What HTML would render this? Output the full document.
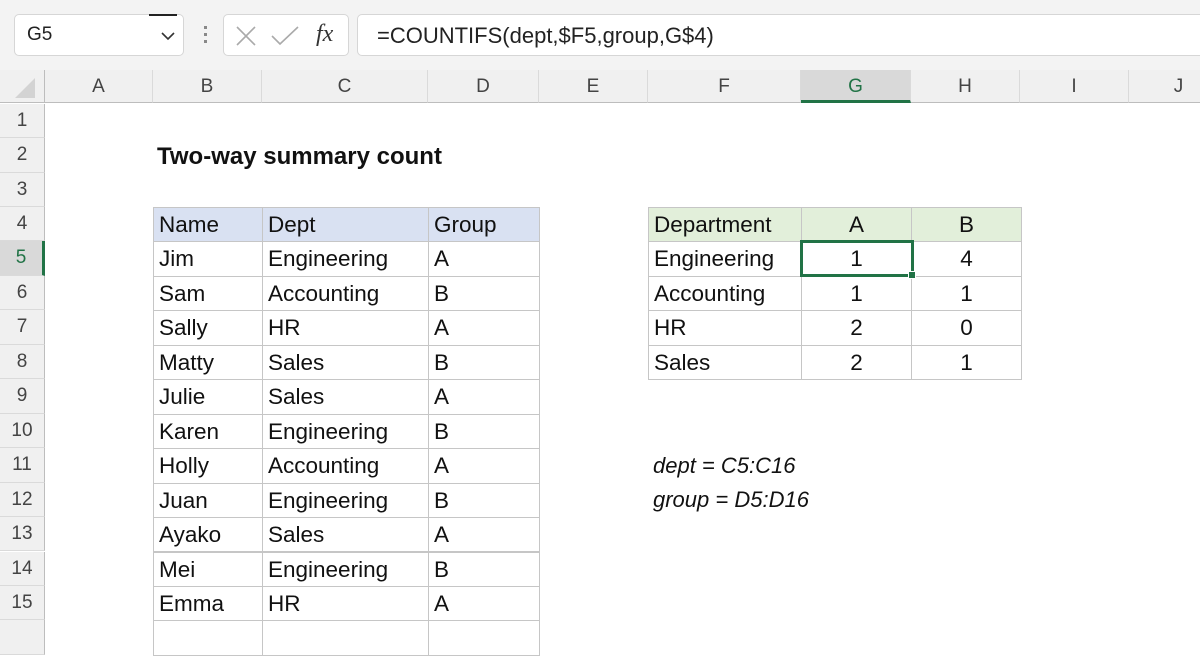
<!DOCTYPE html>
<html><head><style>
*{margin:0;padding:0;box-sizing:border-box}
body{width:1200px;height:630px;overflow:hidden;background:#fff;font-family:"Liberation Sans",sans-serif;position:relative}
.a{position:absolute}
.tb{left:0;top:0;width:1200px;height:70px;background:#f3f3f3}
.box{background:#fff;border:1px solid #d6d6d6;border-radius:5px;height:42px;top:14px}
.ch{top:70px;height:33px;background:#f0f0f0;border-bottom:1px solid #bdbdbd;font-size:19px;color:#444;text-align:center;line-height:33px;border-right:1px solid #dadada}
.rh{left:0;width:45px;background:#f0f0f0;border-right:1px solid #bdbdbd;border-bottom:1px solid #dadada;font-size:19px;color:#444;text-align:center}
.c{border:1px solid #c6c6c6;font-size:22.5px;color:#111;padding-left:5px;white-space:nowrap;overflow:hidden}
.n{text-align:center;padding-left:0}
</style></head><body>
<div class="a tb"></div>
<div class="a box" style="left:14px;width:170px"><span class="a" style="left:12px;top:9px;font-size:19px;color:#222">G5</span><svg class="a" style="left:146px;top:16px" width="14" height="10"><path d="M1 2 L7 8 L13 2" stroke="#333" stroke-width="1.6" fill="none"/></svg><div class="a" style="left:134px;top:-1px;width:28px;height:2px;background:#222"></div></div>
<div class="a" style="left:204px;top:26px;width:3px;height:3px;background:#888"></div>
<div class="a" style="left:204px;top:33px;width:3px;height:3px;background:#888"></div>
<div class="a" style="left:204px;top:40px;width:3px;height:3px;background:#888"></div>
<div class="a box" style="left:223px;width:126px"><svg class="a" style="left:10px;top:10px" width="24" height="22"><path d="M3 2 L21 20 M21 2 L3 20" stroke="#aaa" stroke-width="1.6"/></svg><svg class="a" style="left:46px;top:10px" width="30" height="22"><path d="M2 11 L10 19 L28 2" stroke="#aaa" stroke-width="1.6" fill="none"/></svg><span class="a" style="left:92px;top:6px;font-family:'Liberation Serif',serif;font-style:italic;font-size:24px;color:#333">fx</span></div>
<div class="a box" style="left:357px;width:860px"><span class="a" style="left:19px;top:8px;font-size:22px;color:#222">=COUNTIFS(dept,$F5,group,G$4)</span></div>
<div class="a" style="left:0;top:70px;width:45px;height:33px;background:#f0f0f0;border-right:1px solid #bdbdbd;border-bottom:1px solid #bdbdbd"><svg class="a" style="left:14px;top:7px" width="22" height="22"><path d="M21 1 L21 21 L1 21 Z" fill="#d3d3d3"/></svg></div>
<div class="a ch" style="left:45px;width:108px">A</div>
<div class="a ch" style="left:153px;width:109px">B</div>
<div class="a ch" style="left:262px;width:166px">C</div>
<div class="a ch" style="left:428px;width:111px">D</div>
<div class="a ch" style="left:539px;width:109px">E</div>
<div class="a ch" style="left:648px;width:153px">F</div>
<div class="a ch" style="left:801px;width:110px;background:#d9d9d9;color:#217346;border-bottom:3px solid #217346">G</div>
<div class="a ch" style="left:911px;width:109px">H</div>
<div class="a ch" style="left:1020px;width:109px">I</div>
<div class="a ch" style="left:1129px;width:100px">J</div>
<div id="rows"></div>
<div class="a" style="left:157px;top:143px;font-size:24px;font-weight:bold;color:#111">Two-way summary count</div>
<div class="a" style="left:653px;top:453px;font-size:22px;font-style:italic;color:#111">dept = C5:C16</div>
<div class="a" style="left:653px;top:487px;font-size:22px;font-style:italic;color:#111">group = D5:D16</div>
<script>
var H=34.45,T=207;function tp(n){return T+(n-4)*H}
var s='';
for(var n=1;n<=16;n++){var y=tp(n);s+='<div class="a rh" style="top:'+y+'px;height:'+H+'px;line-height:'+H+'px;'+(n==5?'background:#d9d9d9;color:#217346;border-right:3px solid #217346':'')+'">'+(n<16?n:'')+'</div>'}
var L=[["Name","Dept","Group"],["Jim","Engineering","A"],["Sam","Accounting","B"],["Sally","HR","A"],["Matty","Sales","B"],["Julie","Sales","A"],["Karen","Engineering","B"],["Holly","Accounting","A"],["Juan","Engineering","B"],["Ayako","Sales","A"],["Mei","Engineering","B"],["Emma","HR","A"],["","",""]];
var xs=[153,262,428,539];
for(var r=0;r<L.length;r++)for(var c=0;c<3;c++){s+='<div class="a c" style="left:'+xs[c]+'px;top:'+tp(4+r)+'px;width:'+(xs[c+1]-xs[c]+1)+'px;height:'+(H+1)+'px;line-height:'+H+'px;'+(r==0?'background:#d9e1f2':'')+'">'+L[r][c]+'</div>'}
var R=[["Department","A","B"],["Engineering","1","4"],["Accounting","1","1"],["HR","2","0"],["Sales","2","1"]];
var xr=[648,801,911,1021];
for(var r=0;r<R.length;r++)for(var c=0;c<3;c++){s+='<div class="a c'+(c>0?' n':'')+'" style="left:'+xr[c]+'px;top:'+tp(4+r)+'px;width:'+(xr[c+1]-xr[c]+1)+'px;height:'+(H+1)+'px;line-height:'+H+'px;'+(r==0?'background:#e2efda':'')+'">'+R[r][c]+'</div>'}
s+='<div class="a" style="left:800px;top:'+(tp(5)-1)+'px;width:114px;height:37px;border:3px solid #217346"></div>';
s+='<div class="a" style="left:908px;top:'+(tp(6)-5)+'px;width:8px;height:8px;background:#217346;border:1px solid #fff"></div>';
document.getElementById('rows').innerHTML=s;
</script>
</body></html>
